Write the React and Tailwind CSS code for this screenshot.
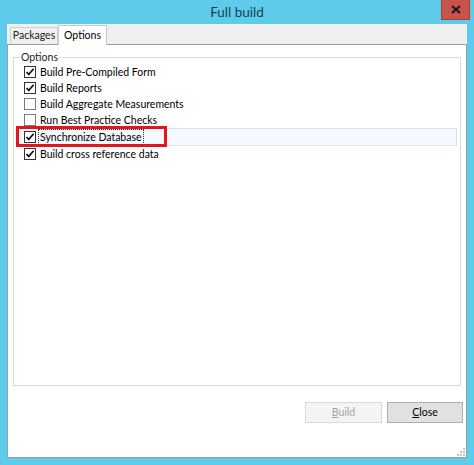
import React from "react";

const options = [
  { label: "Build Pre-Compiled Form", checked: true, h: "h-[16px]" },
  { label: "Build Reports", checked: true, h: "h-[16px]" },
  { label: "Build Aggregate Measurements", checked: false, h: "h-[16px]" },
  { label: "Run Best Practice Checks", checked: false, h: "h-[16px]" },
  { label: "Synchronize Database", checked: true, h: "h-[18px]", focused: true },
  { label: "Build cross reference data", checked: true, h: "h-[16px]" },
];

const CheckBox = ({ checked }) => (
  <span
    className={`flex h-[12px] w-[12px] shrink-0 items-center justify-center border bg-white ${
      checked ? "border-[#333333]" : "border-[#7a7a7a]"
    }`}
  >
    {checked && (
      <svg width="10" height="10" viewBox="0 0 10 10">
        <path d="M1.5 5 L3.8 7.4 L8.6 1.8" fill="none" stroke="#111" strokeWidth="1.7" />
      </svg>
    )}
  </span>
);

const OptionRow = ({ item }) => (
  <div
    className={`mx-[3px] flex items-center gap-[2px] ${item.h} ${
      item.focused ? "border border-[#dce4f1] bg-[#f5f8fc] pl-[6px]" : "pl-[7px]"
    }`}
  >
    <CheckBox checked={item.checked} />
    <span
      className={`px-[1px] leading-[14px] ${item.focused ? "border border-dotted border-[#333]" : "border border-transparent"}`}
    >
      {item.label}
    </span>
  </div>
);

export default function App() {
  return (
    <div
      className="relative flex h-[465px] w-[474px] flex-col bg-[#5fcbea] text-[10.5px] text-black"
      style={{ fontFamily: 'Lato, "Noto Sans", sans-serif' }}
    >
      {/* Title bar */}
      <div className="relative flex h-[24px] shrink-0 items-center justify-center">
        <span className="text-[13.5px] text-[#143f52]">Full build</span>
        <div className="absolute right-[4px] top-0 flex h-[20px] w-[29px] items-center justify-center border border-[#a8403c] border-t-0 bg-[#c9534d]">
          <svg width="10" height="9" viewBox="0 0 10 9">
            <path d="M1 1 L9 8 M9 1 L1 8" stroke="#1a1a1a" strokeWidth="2.2" />
          </svg>
        </div>
      </div>

      {/* Client */}
      <div className="mx-[7px] mb-[7px] flex flex-1 flex-col bg-[#f0f0f0]">
        {/* Tabs */}
        <div className="flex h-[20px] items-end pl-[3px]">
          <div className="flex h-[17px] w-[48px] items-center justify-center border border-b-0 border-[#d0d0d0] bg-[#f0f0f0] text-[#222]">
            Packages
          </div>
          <div className="relative -mb-[1px] flex h-[20px] w-[49px] items-center justify-center border border-b-0 border-[#c8c8c8] bg-white">
            Options
          </div>
        </div>

        {/* Panel */}
        <div className="flex flex-1 flex-col border border-[#8f9db0] bg-white">
          <div className="relative mx-[5px] mt-[12px] h-[329px] border border-[#d5dbe2]">
            <span className="absolute -top-[9px] left-[6px] bg-white px-[1px] leading-[16px] text-[#222]">
              Options
            </span>
            <div className="flex flex-col pt-[6px]">
              {options.map((item) => (
                <OptionRow key={item.label} item={item} />
              ))}
            </div>
          </div>

          <div className="mt-[16px] flex justify-end gap-[5px] pr-[3px]">
            <div className="flex h-[21px] w-[77px] items-center justify-center border border-[#d9d9d9] bg-[#f4f4f4] text-[#a3a3a3]">
              <span>
                <span className="underline">B</span>uild
              </span>
            </div>
            <div className="flex h-[21px] w-[76px] items-center justify-center border border-[#adadad] bg-[#e1e1e1]">
              <span>
                <span className="underline">C</span>lose
              </span>
            </div>
          </div>

          <div className="mt-auto flex justify-end pb-[1px] pr-[1px]">
            <svg width="8" height="8" viewBox="0 0 8 8">
              <rect x="6" y="0" width="2" height="2" fill="#c4c4c4" />
              <rect x="3" y="3" width="2" height="2" fill="#c4c4c4" />
              <rect x="6" y="3" width="2" height="2" fill="#c4c4c4" />
              <rect x="0" y="6" width="2" height="2" fill="#c4c4c4" />
              <rect x="3" y="6" width="2" height="2" fill="#c4c4c4" />
              <rect x="6" y="6" width="2" height="2" fill="#c4c4c4" />
            </svg>
          </div>
        </div>
      </div>

      {/* Annotation highlight */}
      <div className="pointer-events-none absolute left-[16px] top-[126px] h-[21px] w-[151px] border-[3px] border-[#e2161f]" />
    </div>
  );
}
